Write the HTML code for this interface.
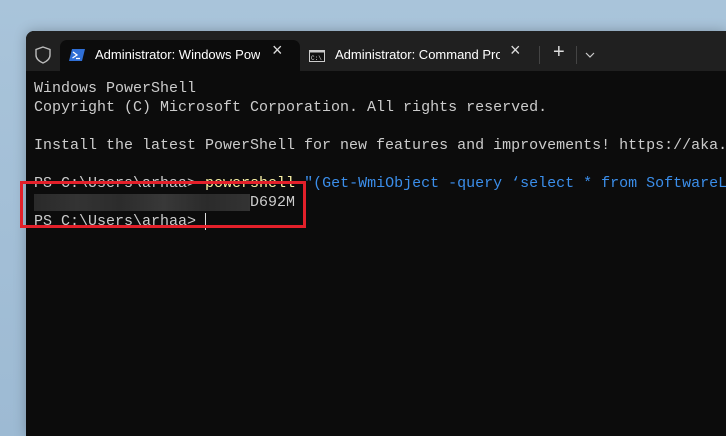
<!DOCTYPE html>
<html><head><style>
html{margin:0;padding:0;width:726px;height:436px;overflow:hidden;background:linear-gradient(180deg,#a9c4da 0%,#9dbad3 100%)}
body{margin:0;padding:0;width:726px;height:436px;overflow:hidden;position:relative;font-family:"Liberation Sans",sans-serif}
.win{position:absolute;left:26px;top:31px;width:700px;height:405px;background:#0c0c0c;border-radius:8px 0 0 0;overflow:hidden;box-shadow:0 0 12px rgba(0,0,0,.25)}
.bar{position:absolute;left:0;top:0;right:0;height:40px;background:#202020}
.tab{position:absolute;top:9px;height:31px;background:#0c0c0c;border-radius:7px 7px 0 0;left:34px;width:240px}
.t{position:absolute;top:16px;font-size:13px;color:#fff;white-space:nowrap}
.term{position:absolute;left:8px;top:48px;font-family:"Liberation Mono",monospace;font-size:15px;line-height:19px;color:#cccccc;white-space:pre}
.y{color:#f9f1a5}.b{color:#3b8eea}
.red{position:absolute;left:20px;top:181px;width:280px;height:41px;border:3px solid #e3202a}
</style></head><body>
<div class="win">
<div class="bar"></div>
<svg style="position:absolute;left:9px;top:15px" width="16" height="18" viewBox="0 0 16 18"><path d="M8 1 L15 3.5 V9 C15 13 11.5 15.5 8 17 C4.5 15.5 1 13 1 9 V3.5 Z" fill="none" stroke="#bbb" stroke-width="1.4"/></svg>
<div class="tab"></div>
<svg style="position:absolute;left:43px;top:18px" width="16" height="12" viewBox="0 0 16 12"><path d="M3 0 H16 L13 12 H0 Z" fill="#2f6fd6"/><path d="M4 3 L8 6 L3.5 9" stroke="#fff" stroke-width="1.3" fill="none"/><path d="M7 9.5 H11" stroke="#fff" stroke-width="1.2"/></svg>
<div class="t" style="left:69px;width:165px;overflow:hidden">Administrator: Windows PowerShell</div>
<div class="t" style="left:246px;top:9px;font-size:18px;color:#ddd">×</div>
<svg style="position:absolute;left:283px;top:19px" width="16" height="12" viewBox="0 0 16 12"><rect x=".5" y=".5" width="15" height="11" fill="#111" stroke="#ccc"/><rect x=".5" y=".5" width="15" height="2" fill="#ccc"/><text x="2" y="10" font-size="6" fill="#ddd" font-family="Liberation Mono">C:\</text></svg>
<div class="t" style="left:309px;width:165px;overflow:hidden">Administrator: Command Prompt</div>
<div class="t" style="left:484px;top:9px;font-size:18px;color:#ddd">×</div>
<div style="position:absolute;left:513px;top:15px;width:1px;height:18px;background:#444"></div>
<div class="t" style="left:527px;top:10px;font-size:20px;color:#ddd">+</div>
<div style="position:absolute;left:550px;top:15px;width:1px;height:18px;background:#444"></div>
<svg style="position:absolute;left:559px;top:21px" width="10" height="6"><path d="M1 1 L5 5 L9 1" stroke="#ccc" fill="none" stroke-width="1.2"/></svg>
<div class="term">Windows PowerShell
Copyright (C) Microsoft Corporation. All rights reserved.

Install the latest PowerShell for new features and improvements! https://aka.ms/PSWindows

PS C:\Users\arhaa&gt; <span class="y">powershell</span> <span class="b">"(Get-WmiObject -query ‘select * from SoftwareLicensingService’).OA3xOriginalProductKey"</span>
<span style="background:linear-gradient(90deg,#2a2a2a,#333 20%,#2c2c2c 40%,#383838 60%,#2b2b2b 80%,#333);color:transparent">XXXXXXXXXXXXXXXXXXXXXXXX</span>D692M
PS C:\Users\arhaa&gt; <span style="border-left:1px solid #ddd"> </span></div>
</div>
<div class="red"></div>
</body></html>
